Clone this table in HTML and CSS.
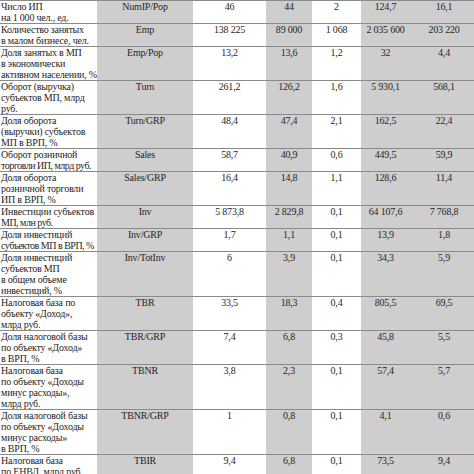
FILE: index.html
```html
<!DOCTYPE html>
<html lang="ru">
<head>
<meta charset="utf-8">
<title>Таблица</title>
<link rel="stylesheet" href="styles.css">
</head>
<body>
<div class="frame">
<table class="data">
<colgroup>
<col class="c1"><col class="c2"><col class="c3"><col class="c4"><col class="c5"><col class="c6"><col class="c7">
</colgroup>
<tbody>
<tr><td class="name">Число ИП<br>на 1 000 чел., ед.</td><td class="g">NumIP/Pop</td><td>46</td><td class="g">44</td><td>2</td><td class="g">124,7</td><td class="g">16,1</td></tr>
<tr><td class="name">Количество занятых<br>в малом бизнесе, чел.</td><td class="g">Emp</td><td>138 225</td><td class="g">89 000</td><td>1 068</td><td class="g">2 035 600</td><td class="g">203 220</td></tr>
<tr><td class="name">Доля занятых в МП<br>в экономически<br>активном населении, %</td><td class="g">Emp/Pop</td><td>13,2</td><td class="g">13,6</td><td>1,2</td><td class="g">32</td><td class="g">4,4</td></tr>
<tr><td class="name">Оборот (выручка)<br>субъектов МП, млрд<br>руб.</td><td class="g">Turn</td><td>261,2</td><td class="g">126,2</td><td>1,6</td><td class="g">5 930,1</td><td class="g">568,1</td></tr>
<tr><td class="name">Доля оборота<br>(выручки) субъектов<br>МП в ВРП, %</td><td class="g">Turn/GRP</td><td>48,4</td><td class="g">47,4</td><td>2,1</td><td class="g">162,5</td><td class="g">22,4</td></tr>
<tr><td class="name">Оборот розничной<br><span class="tight">торговли ИП, млрд руб.</span></td><td class="g">Sales</td><td>58,7</td><td class="g">40,9</td><td>0,6</td><td class="g">449,5</td><td class="g">59,9</td></tr>
<tr><td class="name">Доля оборота<br>розничной торговли<br>ИП в ВРП, %</td><td class="g">Sales/GRP</td><td>16,4</td><td class="g">14,8</td><td>1,1</td><td class="g">128,6</td><td class="g">11,4</td></tr>
<tr><td class="name">Инвестиции субъектов<br><span class="tight">МП, млн руб.</span></td><td class="g">Inv</td><td>5 873,8</td><td class="g">2 829,8</td><td>0,1</td><td class="g">64 107,6</td><td class="g">7 768,8</td></tr>
<tr><td class="name">Доля инвестиций<br><span class="tight">субъектов МП в ВРП, %</span></td><td class="g">Inv/GRP</td><td>1,7</td><td class="g">1,1</td><td>0,1</td><td class="g">13,9</td><td class="g">1,8</td></tr>
<tr><td class="name">Доля инвестиций<br>субъектов МП<br>в общем объеме<br>инвестиций, %</td><td class="g">Inv/TotInv</td><td>6</td><td class="g">3,9</td><td>0,1</td><td class="g">34,3</td><td class="g">5,9</td></tr>
<tr><td class="name">Налоговая база по<br>объекту «Доход»,<br>млрд руб.</td><td class="g">TBR</td><td>33,5</td><td class="g">18,3</td><td>0,4</td><td class="g">805,5</td><td class="g">69,5</td></tr>
<tr><td class="name">Доля налоговой базы<br>по объекту «Доход»<br>в ВРП, %</td><td class="g">TBR/GRP</td><td>7,4</td><td class="g">6,8</td><td>0,3</td><td class="g">45,8</td><td class="g">5,5</td></tr>
<tr><td class="name">Налоговая база<br>по объекту «Доходы<br>минус расходы»,<br>млрд руб.</td><td class="g">TBNR</td><td>3,8</td><td class="g">2,3</td><td>0,1</td><td class="g">57,4</td><td class="g">5,7</td></tr>
<tr><td class="name">Доля налоговой базы<br>по объекту «Доходы<br>минус расходы»<br>в ВРП, %</td><td class="g">TBNR/GRP</td><td>1</td><td class="g">0,8</td><td>0,1</td><td class="g">4,1</td><td class="g">0,6</td></tr>
<tr><td class="name">Налоговая база<br>по ЕНВД, млрд руб.</td><td class="g">TBIR</td><td>9,4</td><td class="g">6,8</td><td>0,1</td><td class="g">73,5</td><td class="g">9,4</td></tr>
</tbody>
</table>
</div>
</body>
</html>
```
FILE: styles.css
```css
html, body {
  margin: 0;
  padding: 0;
  background: #ffffff;
}
body {
  width: 474px;
  height: 474px;
  overflow: hidden;
}
.frame {
  width: 478px;
}
.data {
  border-collapse: collapse;
  table-layout: fixed;
  width: 478px;
  font-family: "Liberation Serif", "Times New Roman", serif;
  font-size: 10px;
  letter-spacing: -0.2px;
  line-height: 11px;
  color: #262626;
}
.c1 { width: 97px; }
.c2 { width: 96px; }
.c3 { width: 73px; }
.c4 { width: 46px; }
.c5 { width: 49px; }
.c6 { width: 49px; }
.c7 { width: 68px; }
.data td {
  border-top: 1px solid #8a8a8a;
  padding: 0;
  vertical-align: top;
  text-align: center;
  white-space: nowrap;
  overflow: hidden;
}
.data td.name {
  text-align: left;
  padding-left: 1px;
}
.data td.g {
  background: #cecece;
}
.tight {
  letter-spacing: -0.5px;
}
```
